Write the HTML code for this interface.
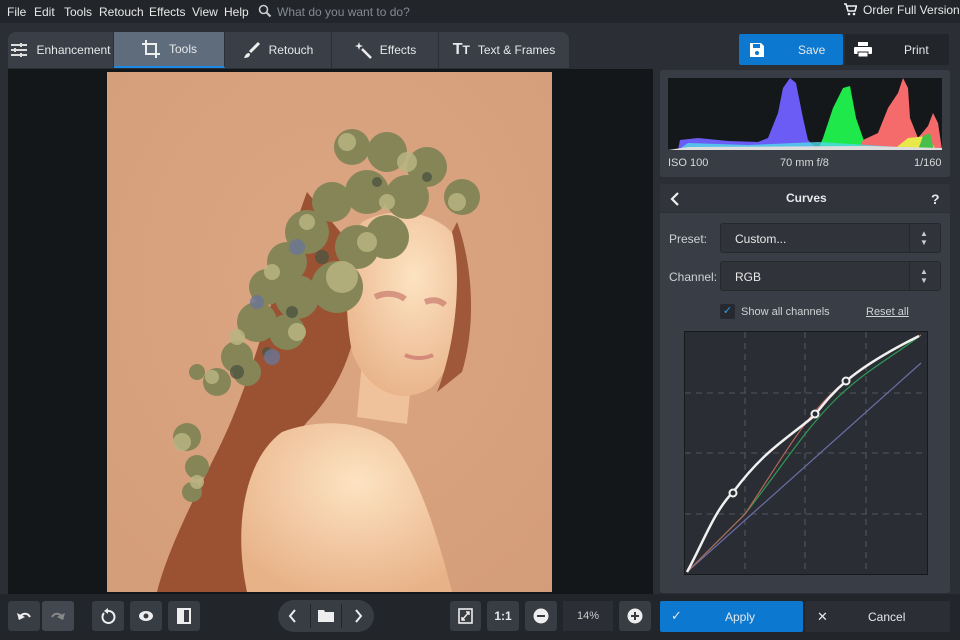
<!DOCTYPE html>
<html><head><meta charset="utf-8"><style>
*{margin:0;padding:0;box-sizing:border-box}
body{width:960px;height:640px;overflow:hidden;background:#2b2e34;font-family:"Liberation Sans",sans-serif;color:#e6e8ea;position:relative}
.a{position:absolute}
.menu{left:0;top:0;width:960px;height:23px;background:#22252a;font-size:12px;color:#e8e8e8}
.menu span{position:absolute;top:5px}
.tab{top:32px;height:36px;background:#3a3e46;font-size:12px;display:flex;align-items:center;justify-content:center;gap:8px;border-right:1px solid #2b2e34}
.btn{background:#383c43;border-radius:3px}
.lbl{font-size:12px;color:#cfd2d6}
.sel{background:#30333a;border:1px solid #25282d;border-radius:3px;height:30px;font-size:12px;color:#e8e8e8}
</style></head><body>
<div class="a menu">
<span style="left:7px">File</span><span style="left:34px">Edit</span><span style="left:64px">Tools</span><span style="left:99px">Retouch</span><span style="left:149px">Effects</span><span style="left:192px">View</span><span style="left:224px">Help</span>
<svg class="a" style="left:258px;top:4px" width="14" height="14"><circle cx="5.5" cy="5.5" r="4" fill="none" stroke="#ccc" stroke-width="1.6"/><path d="M8.5 8.5l4 4" stroke="#ccc" stroke-width="2"/></svg>
<span style="left:277px;color:#858a90">What do you want to do?</span>
<svg class="a" style="left:843px;top:2px" width="14" height="14"><path d="M1 2h2l2 7h7l1.5-5H4" fill="none" stroke="#eee" stroke-width="1.6"/><circle cx="6" cy="12" r="1.3" fill="#eee"/><circle cx="11" cy="12" r="1.3" fill="#eee"/></svg>
<span style="left:863px;top:3px">Order Full Version</span>
</div>
<div class="a tab" style="left:8px;width:106px;border-radius:8px 0 0 0">
<svg width="18" height="16"><path d="M1 3h16M1 8h16M1 13h16" stroke="#ddd" stroke-width="2"/><path d="M11 1v4M5 6v4M11 11v4" stroke="#ddd" stroke-width="2"/></svg>Enhancement</div>
<div class="a tab" style="left:114px;width:111px;background:#5f6c7b;border-bottom:2px solid #1e88e5">
<svg width="20" height="20"><path d="M5 1v14h14M1 5h14v14" fill="none" stroke="#eee" stroke-width="2"/></svg>Tools</div>
<div class="a tab" style="left:225px;width:107px"><svg width="18" height="18"><path d="M16 2L7 11" stroke="#eee" stroke-width="3"/><path d="M6 12c-3 0-4 3-5 5 3 0 6-1 6-4z" fill="#eee"/></svg>Retouch</div>
<div class="a tab" style="left:332px;width:107px"><svg width="18" height="18"><path d="M8 8l9 9" stroke="#eee" stroke-width="2.5"/><path d="M5 1l1 3 3 1-3 1-1 3-1-3-3-1 3-1z" fill="#eee"/></svg>Effects</div>
<div class="a tab" style="left:439px;width:131px;border-radius:0 8px 0 0"><span style="font-weight:bold;font-size:16px">T<span style="font-size:12px">T</span></span>Text &amp; Frames</div>
<div class="a" style="left:739px;top:34px;width:104px;height:31px;background:#0c78cf;border-radius:2px;font-size:12px;display:flex;align-items:center">
<svg style="margin-left:10px" width="16" height="16"><path d="M1 1h11l3 3v11H1z" fill="#fff"/><rect x="4" y="2" width="7" height="4" fill="#0c78cf"/><circle cx="8" cy="11" r="2" fill="#0c78cf"/></svg><span style="margin-left:33px">Save</span></div>
<div class="a" style="left:845px;top:34px;width:104px;height:31px;background:#22252a;border-radius:2px;font-size:12px;display:flex;align-items:center">
<svg style="margin-left:9px" width="18" height="16"><rect x="4" y="0" width="10" height="4" fill="#fff"/><rect x="0" y="5" width="18" height="7" rx="1" fill="#fff"/><rect x="4" y="10" width="10" height="5" fill="#fff" stroke="#22252a"/></svg><span style="margin-left:32px">Print</span></div>
<div class="a" style="left:8px;top:69px;width:645px;height:525px;background:#141719"></div>
<svg class="a" style="left:107px;top:72px" width="445" height="520" viewBox="0 0 445 520">
<defs><radialGradient id="sk" cx="0.55" cy="0.35" r="0.7"><stop offset="0" stop-color="#fde3c2"/><stop offset="1" stop-color="#e8b288"/></radialGradient>
<radialGradient id="bg" cx="0.5" cy="0.4" r="0.8"><stop offset="0" stop-color="#dca683"/><stop offset="1" stop-color="#d49d79"/></radialGradient></defs>
<rect width="445" height="520" fill="url(#bg)"/>
<path d="M200 120C170 200 150 300 110 380 85 430 60 480 50 520H175C150 460 160 400 200 350 240 310 260 250 250 180z" fill="#9a5232"/>
<path d="M140 520C125 450 140 385 175 360 215 345 260 350 285 370 310 400 330 460 345 520z" fill="url(#sk)"/>
<path d="M255 290L250 345 300 352 305 300z" fill="#f0c29c"/>
<path d="M255 150C290 130 350 140 360 190 365 240 350 290 325 315 295 335 260 320 245 280 235 230 240 170 255 150z" fill="url(#sk)"/>
<path d="M268 225c10-5 22-4 30 2M318 230c8-3 15-2 20 3" stroke="#c97b6c" stroke-width="6" fill="none" opacity=".7"/>
<path d="M298 283c8 4 20 4 28 0" stroke="#d48a7a" stroke-width="4" fill="none"/>
<path d="M350 150C365 190 370 250 355 300L330 320C350 270 355 200 345 160z" fill="#a0583a"/>
<g fill="#858558">
<circle cx="245" cy="75" r="18"/><circle cx="280" cy="80" r="20"/><circle cx="320" cy="95" r="20"/><circle cx="355" cy="125" r="18"/><circle cx="300" cy="125" r="22"/><circle cx="260" cy="120" r="22"/><circle cx="225" cy="130" r="20"/><circle cx="280" cy="165" r="22"/><circle cx="250" cy="175" r="22"/><circle cx="200" cy="160" r="22"/><circle cx="180" cy="190" r="20"/><circle cx="230" cy="215" r="26"/><circle cx="190" cy="225" r="22"/><circle cx="160" cy="215" r="18"/><circle cx="150" cy="250" r="20"/><circle cx="180" cy="260" r="18"/><circle cx="130" cy="285" r="16"/><circle cx="110" cy="310" r="14"/><circle cx="140" cy="300" r="14"/><circle cx="90" cy="300" r="8"/><circle cx="80" cy="365" r="14"/><circle cx="90" cy="395" r="12"/><circle cx="85" cy="420" r="10"/>
</g>
<g fill="#b8b582" opacity=".85"><circle cx="240" cy="70" r="9"/><circle cx="300" cy="90" r="10"/><circle cx="350" cy="130" r="9"/><circle cx="260" cy="170" r="10"/><circle cx="200" cy="150" r="8"/><circle cx="165" cy="200" r="8"/><circle cx="235" cy="205" r="16"/><circle cx="130" cy="265" r="8"/><circle cx="75" cy="370" r="9"/><circle cx="90" cy="410" r="7"/><circle cx="280" cy="130" r="8"/><circle cx="105" cy="305" r="7"/><circle cx="190" cy="260" r="9"/></g>
<g fill="#4d5540" opacity=".8"><circle cx="270" cy="110" r="5"/><circle cx="215" cy="185" r="7"/><circle cx="185" cy="240" r="6"/><circle cx="130" cy="300" r="7"/><circle cx="320" cy="105" r="5"/><circle cx="160" cy="280" r="5"/></g>
<g fill="#6a7696" opacity=".8"><circle cx="190" cy="175" r="8"/><circle cx="150" cy="230" r="7"/><circle cx="165" cy="285" r="8"/></g>
</svg>
<div class="a" style="left:660px;top:70px;width:290px;height:107px;background:#383c44;border-radius:3px"></div>
<svg class="a" style="left:668px;top:78px" width="274" height="72" viewBox="0 0 274 72">
<rect width="274" height="72" fill="#15181b"/>
<path d="M10 72L12 62 30 60 60 63 90 64 100 60 110 35 115 10 122 0 128 5 135 40 140 62 150 72z" fill="#6b5cf5"/>
<path d="M150 72L155 60 165 30 175 10 182 8 188 40 195 60 200 72z" fill="#1ee84a"/>
<path d="M190 72L195 62 210 55 220 30 230 15 235 0 240 10 242 40 250 60 260 48 265 35 270 45 274 72z" fill="#f56a6a"/>
<path d="M225 72L240 60 260 58 268 72z" fill="#e8e84a"/>
<path d="M250 72L255 58 262 55 266 72z" fill="#46c04a"/>
<path d="M10 72L20 65 80 67 150 64 200 67 274 72z" fill="#4fd9e8" opacity=".8"/>
<path d="M0 72L20 69 200 68 274 70V72z" fill="#ddd"/>
</svg>
<div class="a lbl" style="left:668px;top:157px;font-size:11px;color:#d8d8d8">ISO 100</div>
<div class="a lbl" style="left:780px;top:157px;font-size:11px;color:#d8d8d8">70 mm f/8</div>
<div class="a lbl" style="left:914px;top:157px;font-size:11px;color:#d8d8d8">1/160</div>
<div class="a" style="left:660px;top:184px;width:290px;height:28px;background:#31343b;border-radius:3px 3px 0 0"></div>
<svg class="a" style="left:670px;top:192px" width="10" height="14"><path d="M8 1L2 7l6 6" fill="none" stroke="#eee" stroke-width="2.2"/></svg>
<div class="a" style="left:786px;top:191px;font-size:12px;font-weight:bold">Curves</div>
<div class="a" style="left:931px;top:191px;font-size:14px;font-weight:bold">?</div>
<div class="a" style="left:660px;top:213px;width:290px;height:380px;background:#393d45;border-radius:0 0 3px 3px"></div>
<div class="a lbl" style="left:669px;top:232px">Preset:</div>
<div class="a sel" style="left:720px;top:223px;width:221px"><span class="a" style="left:14px;top:8px">Custom...</span><div class="a" style="left:188px;top:0;width:1px;height:28px;background:#25282d"></div><span class="a" style="left:199px;top:5px;font-size:8px;line-height:9px;color:#ccc">▲<br>▼</span></div>
<div class="a lbl" style="left:669px;top:270px">Channel:</div>
<div class="a sel" style="left:720px;top:261px;width:221px"><span class="a" style="left:14px;top:8px">RGB</span><div class="a" style="left:188px;top:0;width:1px;height:28px;background:#25282d"></div><span class="a" style="left:199px;top:5px;font-size:8px;line-height:9px;color:#ccc">▲<br>▼</span></div>
<div class="a" style="left:720px;top:304px;width:15px;height:15px;background:#262930;border-radius:2px;color:#2d9cf0;font-size:11px;text-align:center;line-height:15px">✓</div>
<div class="a lbl" style="left:741px;top:306px;font-size:11px">Show all channels</div>
<div class="a lbl" style="left:866px;top:306px;font-size:11px;text-decoration:underline">Reset all</div>
<svg class="a" style="left:684px;top:331px" width="244" height="244" viewBox="0 0 244 244">
<rect x="0.5" y="0.5" width="243" height="243" fill="#2a2d33" stroke="#17191c"/>
<g stroke="#4b4f56" stroke-dasharray="6 5" stroke-width="1.3"><path d="M61 1v242M121 1v242M182 1v242M1 62h242M1 122h242M1 183h242"/></g>
<path d="M3 241L237 32" stroke="#6a6fa8" stroke-width="1.2"/>
<path d="M3 241L61 183C95 140 120 100 150 70S210 25 237 4" stroke="#2e9a55" fill="none" stroke-width="1.2"/>
<path d="M3 241L61 183C90 140 115 95 145 65S205 22 237 4" stroke="#b4685a" fill="none" stroke-width="1.2"/>
<path d="M3 241C20 210 30 180 50 160 80 120 100 110 130 85 150 60 165 40 235 5" stroke="#f0f0f0" fill="none" stroke-width="2.5"/>
<g fill="#2a2d33" stroke="#f0f0f0" stroke-width="2"><circle cx="49" cy="162" r="3.5"/><circle cx="131" cy="83" r="3.5"/><circle cx="162" cy="50" r="3.5"/></g>
</svg>
<div class="a" style="left:0;top:594px;width:960px;height:46px;background:#22252a"></div>
<div class="a btn" style="left:8px;top:601px;width:32px;height:30px"><svg style="margin:8px" width="16" height="14"><path d="M3 10C5 4 11 3 14 8" fill="none" stroke="#eee" stroke-width="2"/><path d="M1 4l2 7 6-3z" fill="#eee"/></svg></div>
<div class="a btn" style="left:42px;top:601px;width:32px;height:30px;background:#43474f"><svg style="margin:8px" width="16" height="14"><path d="M13 10C11 4 5 3 2 8" fill="none" stroke="#888" stroke-width="2"/><path d="M15 4l-2 7-6-3z" fill="#888"/></svg></div>
<div class="a btn" style="left:92px;top:601px;width:32px;height:30px"><svg style="margin:7px 8px" width="16" height="16"><path d="M4 5a6 6 0 1 0 4-2" fill="none" stroke="#eee" stroke-width="2"/><path d="M8 0v6l-4-3z" fill="#eee"/></svg></div>
<div class="a btn" style="left:130px;top:601px;width:32px;height:30px"><svg style="margin:8px" width="16" height="14"><ellipse cx="8" cy="7" rx="7" ry="5" fill="#eee"/><circle cx="8" cy="7" r="2.5" fill="#383c43"/></svg></div>
<div class="a btn" style="left:168px;top:601px;width:32px;height:30px"><svg style="margin:7px 9px" width="14" height="16"><rect x="1" y="1" width="12" height="14" fill="none" stroke="#eee" stroke-width="2"/><rect x="1" y="1" width="6" height="14" fill="#eee"/></svg></div>
<div class="a" style="left:278px;top:600px;width:96px;height:32px;background:#383c43;border-radius:16px"></div>
<div class="a" style="left:310px;top:604px;width:1px;height:24px;background:#22252a"></div>
<div class="a" style="left:341px;top:604px;width:1px;height:24px;background:#22252a"></div>
<svg class="a" style="left:288px;top:609px" width="10" height="14"><path d="M7 1L2 7l5 6" fill="none" stroke="#eee" stroke-width="2"/></svg>
<svg class="a" style="left:318px;top:609px" width="16" height="13"><path d="M0 1h6l1 2h9v10H0z" fill="#eee"/></svg>
<svg class="a" style="left:353px;top:609px" width="10" height="14"><path d="M3 1l5 6-5 6" fill="none" stroke="#eee" stroke-width="2"/></svg>
<div class="a btn" style="left:450px;top:601px;width:31px;height:30px"><svg style="margin:7px 8px" width="15" height="16"><rect x="1" y="1" width="13" height="14" fill="none" stroke="#eee" stroke-width="1.6"/><path d="M4 12l7-8M8 4h3v3M4 9v3h3" fill="none" stroke="#eee" stroke-width="1.4"/></svg></div>
<div class="a btn" style="left:487px;top:601px;width:32px;height:30px;font-size:12px;text-align:center;line-height:30px;font-weight:bold">1:1</div>
<div class="a btn" style="left:525px;top:601px;width:32px;height:30px"><svg style="margin:7px 8px" width="16" height="16"><circle cx="8" cy="8" r="7.5" fill="#eee"/><path d="M4 8h8" stroke="#383c43" stroke-width="2"/></svg></div>
<div class="a" style="left:563px;top:601px;width:50px;height:30px;background:#2b2e34;font-size:11px;text-align:center;line-height:30px;color:#ccc">14%</div>
<div class="a btn" style="left:619px;top:601px;width:32px;height:30px"><svg style="margin:7px 8px" width="16" height="16"><circle cx="8" cy="8" r="7.5" fill="#eee"/><path d="M4 8h8M8 4v8" stroke="#383c43" stroke-width="2"/></svg></div>
<div class="a" style="left:660px;top:601px;width:143px;height:31px;background:#0c78cf;border-radius:2px;font-size:12px"><span class="a" style="left:11px;top:7px;font-size:13px">✓</span><span class="a" style="left:65px;top:9px">Apply</span></div>
<div class="a" style="left:805px;top:601px;width:145px;height:31px;background:#2b2e34;border-radius:2px;font-size:12px"><span class="a" style="left:12px;top:8px;font-size:13px">✕</span><span class="a" style="left:63px;top:9px">Cancel</span></div>
</body></html>
